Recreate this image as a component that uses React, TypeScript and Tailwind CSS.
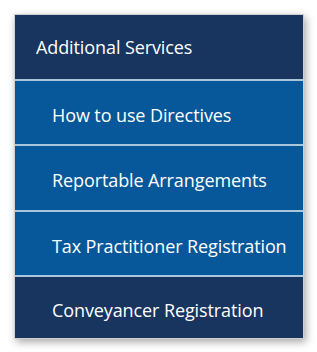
import React from "react";

const rows = [
  { t: "How to use Directives", h: "h-[63px]", dark: false },
  { t: "Reportable Arrangements", h: "h-[64px]", dark: false },
  { t: "Tax Practitioner Registration", h: "h-[63px]", dark: false },
  { t: "Conveyancer Registration", h: "h-[61px]", dark: true },
];

export default function App() {
  return (
    <div className="w-[317px] h-[352px] bg-white pt-[14px] pl-[14px]" style={{ fontFamily: '"Open Sans", "Noto Sans", sans-serif' }}>
      <div className="w-[290px] flex flex-col border border-[#cfcfcf] shadow-[2px_3px_8px_rgba(0,0,0,0.35)] bg-[#a9c6dc] gap-[2px]">
        <div className="h-[64px] bg-[#17355f] flex items-center pl-[21px] text-[18px] tracking-[-0.1px] text-white">
          Additional Services
        </div>
        {rows.map((r) => (
          <div
            key={r.t}
            className={`${r.h} ${r.dark ? "bg-[#17355f]" : "bg-[#07589a]"} flex items-center pl-[37px] pt-[5px] text-[18px] tracking-[-0.1px] text-white`}
          >
            {r.t}
          </div>
        ))}
      </div>
    </div>
  );
}
